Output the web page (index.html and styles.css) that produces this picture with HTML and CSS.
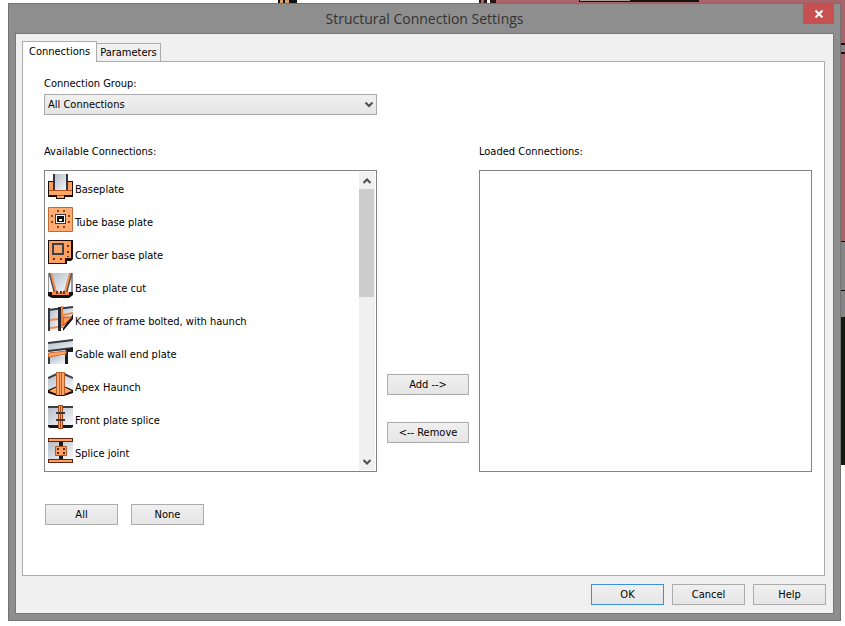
FILE: index.html
```html
<!DOCTYPE html>
<html lang="en">

<head>
  <meta charset="UTF-8">
  <meta name="viewport" content="width=device-width, initial-scale=1.0">
  <title>Structural Connection Settings</title>
  <link rel="stylesheet" href="styles.css">
</head>

<body>
  <!-- Drawing behind the dialog -->
  <svg class="backdrop" viewBox="0 0 845 626" preserveAspectRatio="none" aria-hidden="true">
    <rect width="845" height="626" fill="#fff" />
    <path d="M479 0H845V241H479z" fill="#a86468" />
    <path d="M278 0h19v4h-19z" fill="#111" />
    <path d="M280 0h3v4h-3zM285 0h4v4h-4z" fill="#d9a06c" />
    <path d="M479 0h17v4h-17z" fill="#2a1414" />
    <path d="M481 0h3v4h-3z" fill="#a86468" />
    <path d="M487 0h3v4h-3z" fill="#fff" />
    <path d="M579 0h120v2H579z" fill="#111" />
    <path d="M580 0h50v1h-50z" fill="#a8a098" />
    <path d="M838 43h7v11h-7z" fill="#111" />
    <path d="M838 45h7v7h-7z" fill="#858585" />
    <path d="M838 241h7v76h-7z" fill="#858585" />
    <path d="M838 241h7v1h-7zM838 290h7v1h-7z" fill="#000" />
    <path d="M838 317h7v148h-7z" fill="#151b0c" />
  </svg>

  <div class="dialog">
    <header class="title-bar">
      <h1>Structural Connection Settings</h1>
      <button type="button" class="close-btn" aria-label="Close">
        <svg width="8" height="8" viewBox="0 0 8 8"><path d="M0.5 0.5L7.5 7.5M7.5 0.5L0.5 7.5" stroke="#fff" stroke-width="2" /></svg>
      </button>
    </header>

    <form class="client">
      <div class="tabs" role="tablist">
        <button type="button" class="tab active" role="tab" aria-selected="true">Connections</button>
        <button type="button" class="tab" role="tab" aria-selected="false">Parameters</button>
      </div>

      <div class="panel" role="tabpanel">
        <div class="columns">
          <div class="column">
            <label for="group">Connection Group:</label>
            <div class="select-wrap">
              <select id="group">
                <option>All Connections</option>
              </select>
              <svg class="arrow" width="8" height="6" viewBox="0 0 8 6"><path d="M0.5 0.5L4 4L7.5 0.5" /></svg>
            </div>
          </div>
        </div>

        <div class="columns lists">
          <section class="column">
            <h2 id="availableLabel">Available Connections:</h2>
            <div class="list-box">
              <ul class="items" role="listbox" aria-labelledby="availableLabel">
                <li role="option">
                  <svg viewBox="0 0 25 25">
                    <path d="M0 7H5V16H20V7H25V23H17V25H8V23H0z" fill="#1a0d06" />
                    <path d="M7 0H19V16H7z" fill="url(#steel)" />
                    <path d="M1 8H5V16H1zM20 8H24V16H20z" fill="#fa9c5e" />
                    <path d="M1 17H24V21H1zM9 22H16V24H9z" fill="#ffa566" />
                    <path d="M1 16H24V17H1zM9 21H16V22H9z" fill="#b4521e" />
                    <path d="M5 0H7V16H5zM18 0H20V16H18z" fill="#30363e" />
                  </svg>
                  <span>Baseplate</span>
                </li>
                <li role="option">
                  <svg viewBox="0 0 25 25">
                    <path d="M0.5 0.5H24.5V24.5H0.5z" fill="#ffad72" stroke="#c06a38" />
                    <path d="M7 7H18V17H7z" fill="#3a3f46" />
                    <path d="M8 8H17V16H8z" fill="#f4f6f8" />
                    <path d="M9 9H16V15H9z" fill="#111" />
                    <path d="M11 12H14V14H11z" fill="#fff" />
                    <path d="M9 3h2v2H9zM15 3h2v2h-2zM9 19h2v2H9zM15 19h2v2h-2zM3 8h2v2H3zM3 14h2v2H3zM20 8h2v2h-2zM20 14h2v2h-2z" fill="#8a4622" />
                  </svg>
                  <span>Tube base plate</span>
                </li>
                <li role="option">
                  <svg viewBox="0 0 25 25">
                    <path d="M0 0H25V19L23 21H19V24H0z" fill="#1a0d06" />
                    <path d="M1 1H23V18H17V23H1z" fill="#ffa061" />
                    <path d="M5 4H15V14H5z" fill="#f9a468" stroke="#3c4249" stroke-width="2" />
                    <path d="M19 5h2v2h-2zM19 11h2v2h-2zM5 18h2v2H5zM12 18h2v2h-2zM19 16h2v1h-2z" fill="#6e3416" />
                  </svg>
                  <span>Corner base plate</span>
                </li>
                <li role="option">
                  <svg viewBox="0 0 25 25">
                    <path d="M0 0H25V20H0z" fill="#f6f7f9" />
                    <path d="M2 0H23L18 19H7z" fill="url(#steel)" />
                    <path d="M0 0V20M24 0V20" stroke="#333" />
                    <path d="M2 0L7 19M23 0L18 19" stroke="#56504e" stroke-width="3" />
                    <path d="M3 0L8 19M22 0L17 19" stroke="#f09257" stroke-width="2" />
                    <path d="M0 19H4L5 21H20L21 19H25V22L21 25H4L0 23z" fill="#111" />
                    <path d="M4 19H21V22H4z" fill="#ff8c43" />
                    <path d="M8 18h2v3H8zM12 18h2v3h-2zM15 18h2v3h-2z" fill="#474346" />
                  </svg>
                  <span>Base plate cut</span>
                </li>
                <li role="option">
                  <svg viewBox="0 0 25 25">
                    <path d="M1 3H11V24H1z" fill="url(#steel)" />
                    <path d="M14 3L25 1V10H14z" fill="url(#steel)" />
                    <path d="M0 2H2V25H0z" fill="#313841" />
                    <path d="M0 4L25 1" stroke="#313841" stroke-width="2" />
                    <path d="M15 22V25L25 13V8z" fill="#111" />
                    <path d="M15 11H24L15 20z" fill="#ff9753" stroke="#a84a1c" />
                    <path d="M10 1H13V25H10z" fill="#26282d" />
                    <path d="M13 0H15V22H13z" fill="#f0803c" />
                    <path d="M2 14L10 13M2 22L10 21M15 9L25 7" stroke="#ee8b50" stroke-width="2" />
                  </svg>
                  <span>Knee of frame bolted, with haunch</span>
                </li>
                <li role="option">
                  <svg viewBox="0 0 25 25">
                    <path d="M0 4L25 1V10L0 13z" fill="url(#steel)" />
                    <path d="M2 17H18V25H2z" fill="url(#steel)" />
                    <path d="M0 4L25 1M0 12L25 9" stroke="#353b42" stroke-width="2" />
                    <path d="M0 18H2V25H0z" fill="#353b42" />
                    <path d="M18 10L25 9V13H20V25H17V14z" fill="#1b1d20" />
                    <path d="M0.5 14L18 12V15L0.5 18z" fill="#ffa364" stroke="#c9692f" />
                  </svg>
                  <span>Gable wall end plate</span>
                </li>
                <li role="option">
                  <svg viewBox="0 0 25 25">
                    <path d="M0 6L9 2H16L25 6V17L16 15H9L0 18z" fill="url(#steel)" />
                    <path d="M0 6L9 2M25 6L16 2" stroke="#3b4148" stroke-width="2" />
                    <path d="M0 18L9 14H16L25 18V21L16 24H9L0 21z" fill="#1a0d06" />
                    <path d="M1 19L9 15V22zM16 15L24 19L16 22z" fill="#ffa364" />
                    <path d="M8 0H17V23H8z" fill="#b8602c" />
                    <path d="M9 1H11V23H9zM12 1H13V23H12zM14 1H16V23H14z" fill="#ffa566" />
                  </svg>
                  <span>Apex Haunch</span>
                </li>
                <li role="option">
                  <svg viewBox="0 0 25 25">
                    <path d="M0 2H25V20H0z" fill="url(#steel)" />
                    <path d="M0 1H25V3H0z" fill="#3a4048" />
                    <path d="M0 20H25V22L23 23H2L0 22z" fill="#16181b" />
                    <path d="M10 0H15V24H10z" fill="#a84b1c" />
                    <path d="M11 1H12V23H11zM13 1H14V23H13z" fill="#ffa566" />
                    <path d="M8 7H17V9H8zM8 14H17V16H8z" fill="#3a3a3c" />
                  </svg>
                  <span>Front plate splice</span>
                </li>
                <li role="option">
                  <svg viewBox="0 0 25 25">
                    <path d="M0 4H25V21H0z" fill="url(#steel)" />
                    <path d="M11 4H15V21H11z" fill="#1a1c1f" />
                    <path d="M0 0H25V4H0zM0 21H25V25H0z" fill="#5c2610" />
                    <path d="M1 1H24V3H1zM1 22H24V24H1z" fill="#ffa061" />
                    <path d="M7.5 8.5H18.5V17.5H7.5z" fill="#ffa061" stroke="#b4561f" />
                    <path d="M9 10h2v2H9zM15 10h2v2h-2zM9 14h2v2H9zM15 14h2v2h-2z" fill="#4e2814" />
                  </svg>
                  <span>Splice joint</span>
                </li>
              </ul>
              <div class="scrollbar">
                <button type="button" aria-label="Scroll up"><svg class="arrow" width="8" height="6" viewBox="0 0 8 6"><path d="M0.5 5L4 1.5L7.5 5" /></svg></button>
                <div class="thumb"></div>
                <button type="button" aria-label="Scroll down"><svg class="arrow" width="8" height="6" viewBox="0 0 8 6"><path d="M0.5 1L4 4.5L7.5 1" /></svg></button>
              </div>
            </div>
          </section>

          <div class="move-btns">
            <button type="button" class="btn">Add --&gt;</button>
            <button type="button" class="btn">&lt;-- Remove</button>
          </div>

          <section class="column">
            <h2 id="loadedLabel">Loaded Connections:</h2>
            <div class="list-box">
              <ul class="items" role="listbox" aria-labelledby="loadedLabel"></ul>
            </div>
          </section>
        </div>

        <div class="select-btns">
          <button type="button" class="btn">All</button>
          <button type="button" class="btn">None</button>
        </div>
      </div>

      <footer class="dialog-btns">
        <button type="button" class="btn default">OK</button>
        <button type="button" class="btn">Cancel</button>
        <button type="button" class="btn">Help</button>
      </footer>
    </form>
  </div>

  <!-- Shared gradient for the steel parts of the icons -->
  <svg class="defs" width="0" height="0" aria-hidden="true">
    <linearGradient id="steel" x1="0" y1="0" x2="1" y2="1">
      <stop offset="0" stop-color="#b4bcc8" />
      <stop offset="1" stop-color="#f7f9fb" />
    </linearGradient>
  </svg>
</body>

</html>
```

FILE: styles.css
```css
* {
  box-sizing: border-box;
}

body {
  margin: 0;
  min-height: 100vh;
  padding: 3px 4px 5px 8px;
  display: flex;
  font-family: Tahoma, "DejaVu Sans Condensed", sans-serif;
  font-size: 11px;
  line-height: 14px;
  color: #000;
}

.backdrop {
  position: absolute;
  top: 0;
  left: 0;
  width: 100%;
  height: 100%;
  z-index: -1;
}

.defs {
  position: absolute;
}

button,
select {
  font: inherit;
  color: inherit;
}

/* Window frame */
.dialog {
  flex: 1;
  display: flex;
  flex-direction: column;
  padding: 0 6px 6px;
  background-color: #8e8e8e;
  border: 1px solid #727272;
}

.title-bar {
  display: grid;
  grid-template-columns: 1fr auto 1fr;
  height: 29px;
}

.title-bar h1 {
  grid-column: 2;
  margin: 0;
  font-family: "Segoe UI", "Open Sans", sans-serif;
  font-size: 14px;
  font-weight: normal;
  line-height: 30px;
  color: #333;
}

.close-btn {
  justify-self: end;
  display: flex;
  justify-content: center;
  align-items: center;
  width: 31px;
  height: 20px;
  padding: 0;
  border: none;
  background-color: #c75050;
}

.client {
  flex: 1;
  display: flex;
  flex-direction: column;
  padding: 7px 8px 8px 6px;
  background-color: #f0f0f0;
  border: 1px solid #777;
}

/* Tabs */
.tabs {
  display: flex;
  align-items: flex-end;
}

.tab {
  height: 18px;
  padding: 1px 3px 0;
  border: 1px solid #acacac;
  border-left: none;
  border-bottom: none;
  background-color: #f0f0f0;
}

.tab.active {
  height: 21px;
  padding: 0 6px 1px;
  border-left: 1px solid #acacac;
  background-color: #fff;
  margin-bottom: -1px;
  z-index: 1;
}

.panel {
  flex: 1;
  padding: 15px 12px 20px 21px;
  background-color: #fff;
  border: 1px solid #acacac;
}

.columns {
  display: grid;
  grid-template-columns: 1fr 82px 1fr;
  column-gap: 10px;
}

.column label,
.column h2 {
  display: block;
  margin: 0;
  font-size: 11px;
  font-weight: normal;
}

.select-wrap {
  display: grid;
  align-items: center;
  margin-top: 3px;
}

.select-wrap select,
.select-wrap .arrow {
  grid-area: 1 / 1;
}

.select-wrap .arrow {
  justify-self: end;
  margin-right: 4px;
  pointer-events: none;
}

select {
  appearance: none;
  width: 100%;
  height: 21px;
  padding: 1px 3px 0;
  border: 1px solid #acacac;
  border-radius: 0;
  background: linear-gradient(#f0f0f0, #e5e5e5);
}

.arrow path {
  fill: none;
  stroke: #505050;
  stroke-width: 2;
}

/* Lists */
.lists {
  margin-top: 30px;
}

.list-box {
  display: flex;
  height: 302px;
  margin-top: 11px;
  padding: 1px;
  border: 1px solid #828282;
  background-color: #fff;
}

.items {
  flex: 1;
  margin: 0;
  padding: 0 2px;
  list-style: none;
}

.items li {
  display: flex;
  align-items: center;
  gap: 2px;
  height: 33px;
  padding-top: 2px;
}

.items svg {
  width: 25px;
  height: 25px;
  margin-bottom: 6px;
}

.scrollbar {
  display: flex;
  flex-direction: column;
  width: 16px;
  background-color: #f0f0f0;
}

.scrollbar button {
  display: flex;
  justify-content: center;
  align-items: center;
  height: 17px;
  padding: 0;
  border: none;
  background: none;
}

.scrollbar .thumb {
  height: 108px;
  margin: 0 1px 0 0;
  background-color: #cdcdcd;
}

.scrollbar button:last-child {
  margin-top: auto;
}

/* Buttons */
.btn {
  min-width: 73px;
  height: 21px;
  padding: 1px 4px 0;
  border: 1px solid #acacac;
  background: linear-gradient(#f0f0f0, #e5e5e5);
}

.btn.default {
  border-color: #3c90e4;
}

.move-btns {
  display: flex;
  flex-direction: column;
  justify-content: flex-end;
  gap: 27px;
  padding-bottom: 29px;
}

.select-btns {
  display: flex;
  gap: 13px;
  margin: 32px 0 0 1px;
}

.dialog-btns {
  display: flex;
  justify-content: flex-end;
  gap: 8px;
  margin: 8px -1px 0 0;
}
```
